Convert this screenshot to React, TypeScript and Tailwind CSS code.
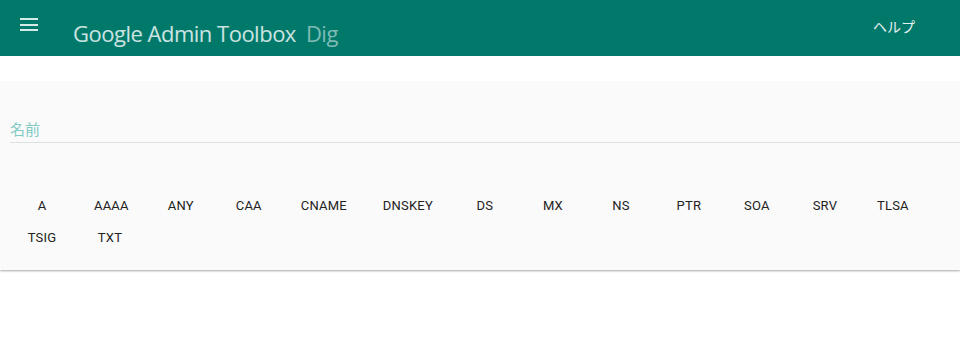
import React from "react";

const TYPES = [
  "A", "AAAA", "ANY", "CAA", "CNAME", "DNSKEY", "DS", "MX", "NS", "PTR", "SOA", "SRV", "TLSA", "TSIG", "TXT",
];

const App = () => {
  return (
    <div className="min-h-screen bg-white" style={{ fontFamily: "Roboto, 'Noto Sans CJK JP', sans-serif" }}>
      {/* Toolbar */}
      <header className="h-14 bg-[#00796b] flex items-start relative">
        <button className="w-[18px] mt-[18px] ml-5 flex flex-col gap-[3.5px]">
          <span className="block h-[2px] bg-[#d5ebe8]" />
          <span className="block h-[2px] bg-[#d5ebe8]" />
          <span className="block h-[2px] bg-[#d5ebe8]" />
        </button>
        <div className="ml-[35px] mt-[17px] flex items-baseline tracking-[-0.5px]">
          <span className="text-[22px] font-medium text-white/80" style={{ fontFamily: "'Open Sans', sans-serif" }}>
            Google Admin Toolbox
          </span>
          <span className="ml-[10px] text-[22px] font-medium text-white/50" style={{ fontFamily: "'Open Sans', sans-serif" }}>
            Dig
          </span>
        </div>
        <div className="ml-auto mr-[45px] mt-[17px] text-[14px] text-white/90">ヘルプ</div>
      </header>

      {/* Query card */}
      <main className="mt-[26px] bg-[#fafafa] shadow-[0_1px_2px_rgba(0,0,0,0.35)] pt-[38px] pb-4">
        <div className="ml-[10px] pb-[2px] border-b border-[#e0e0e0]">
          <label className="block text-[15px] leading-5 text-[#80cbc4]">名前</label>
        </div>
        <div className="mt-[47px] mx-[10px] flex flex-wrap gap-x-[4px]">
          {TYPES.map((t) => (
            <button
              key={t}
              className="min-w-[64px] h-8 px-4 text-[13px] tracking-[0.2px] font-normal text-[#222] uppercase"
            >
              {t}
            </button>
          ))}
        </div>
      </main>
    </div>
  );
};

export default App;
